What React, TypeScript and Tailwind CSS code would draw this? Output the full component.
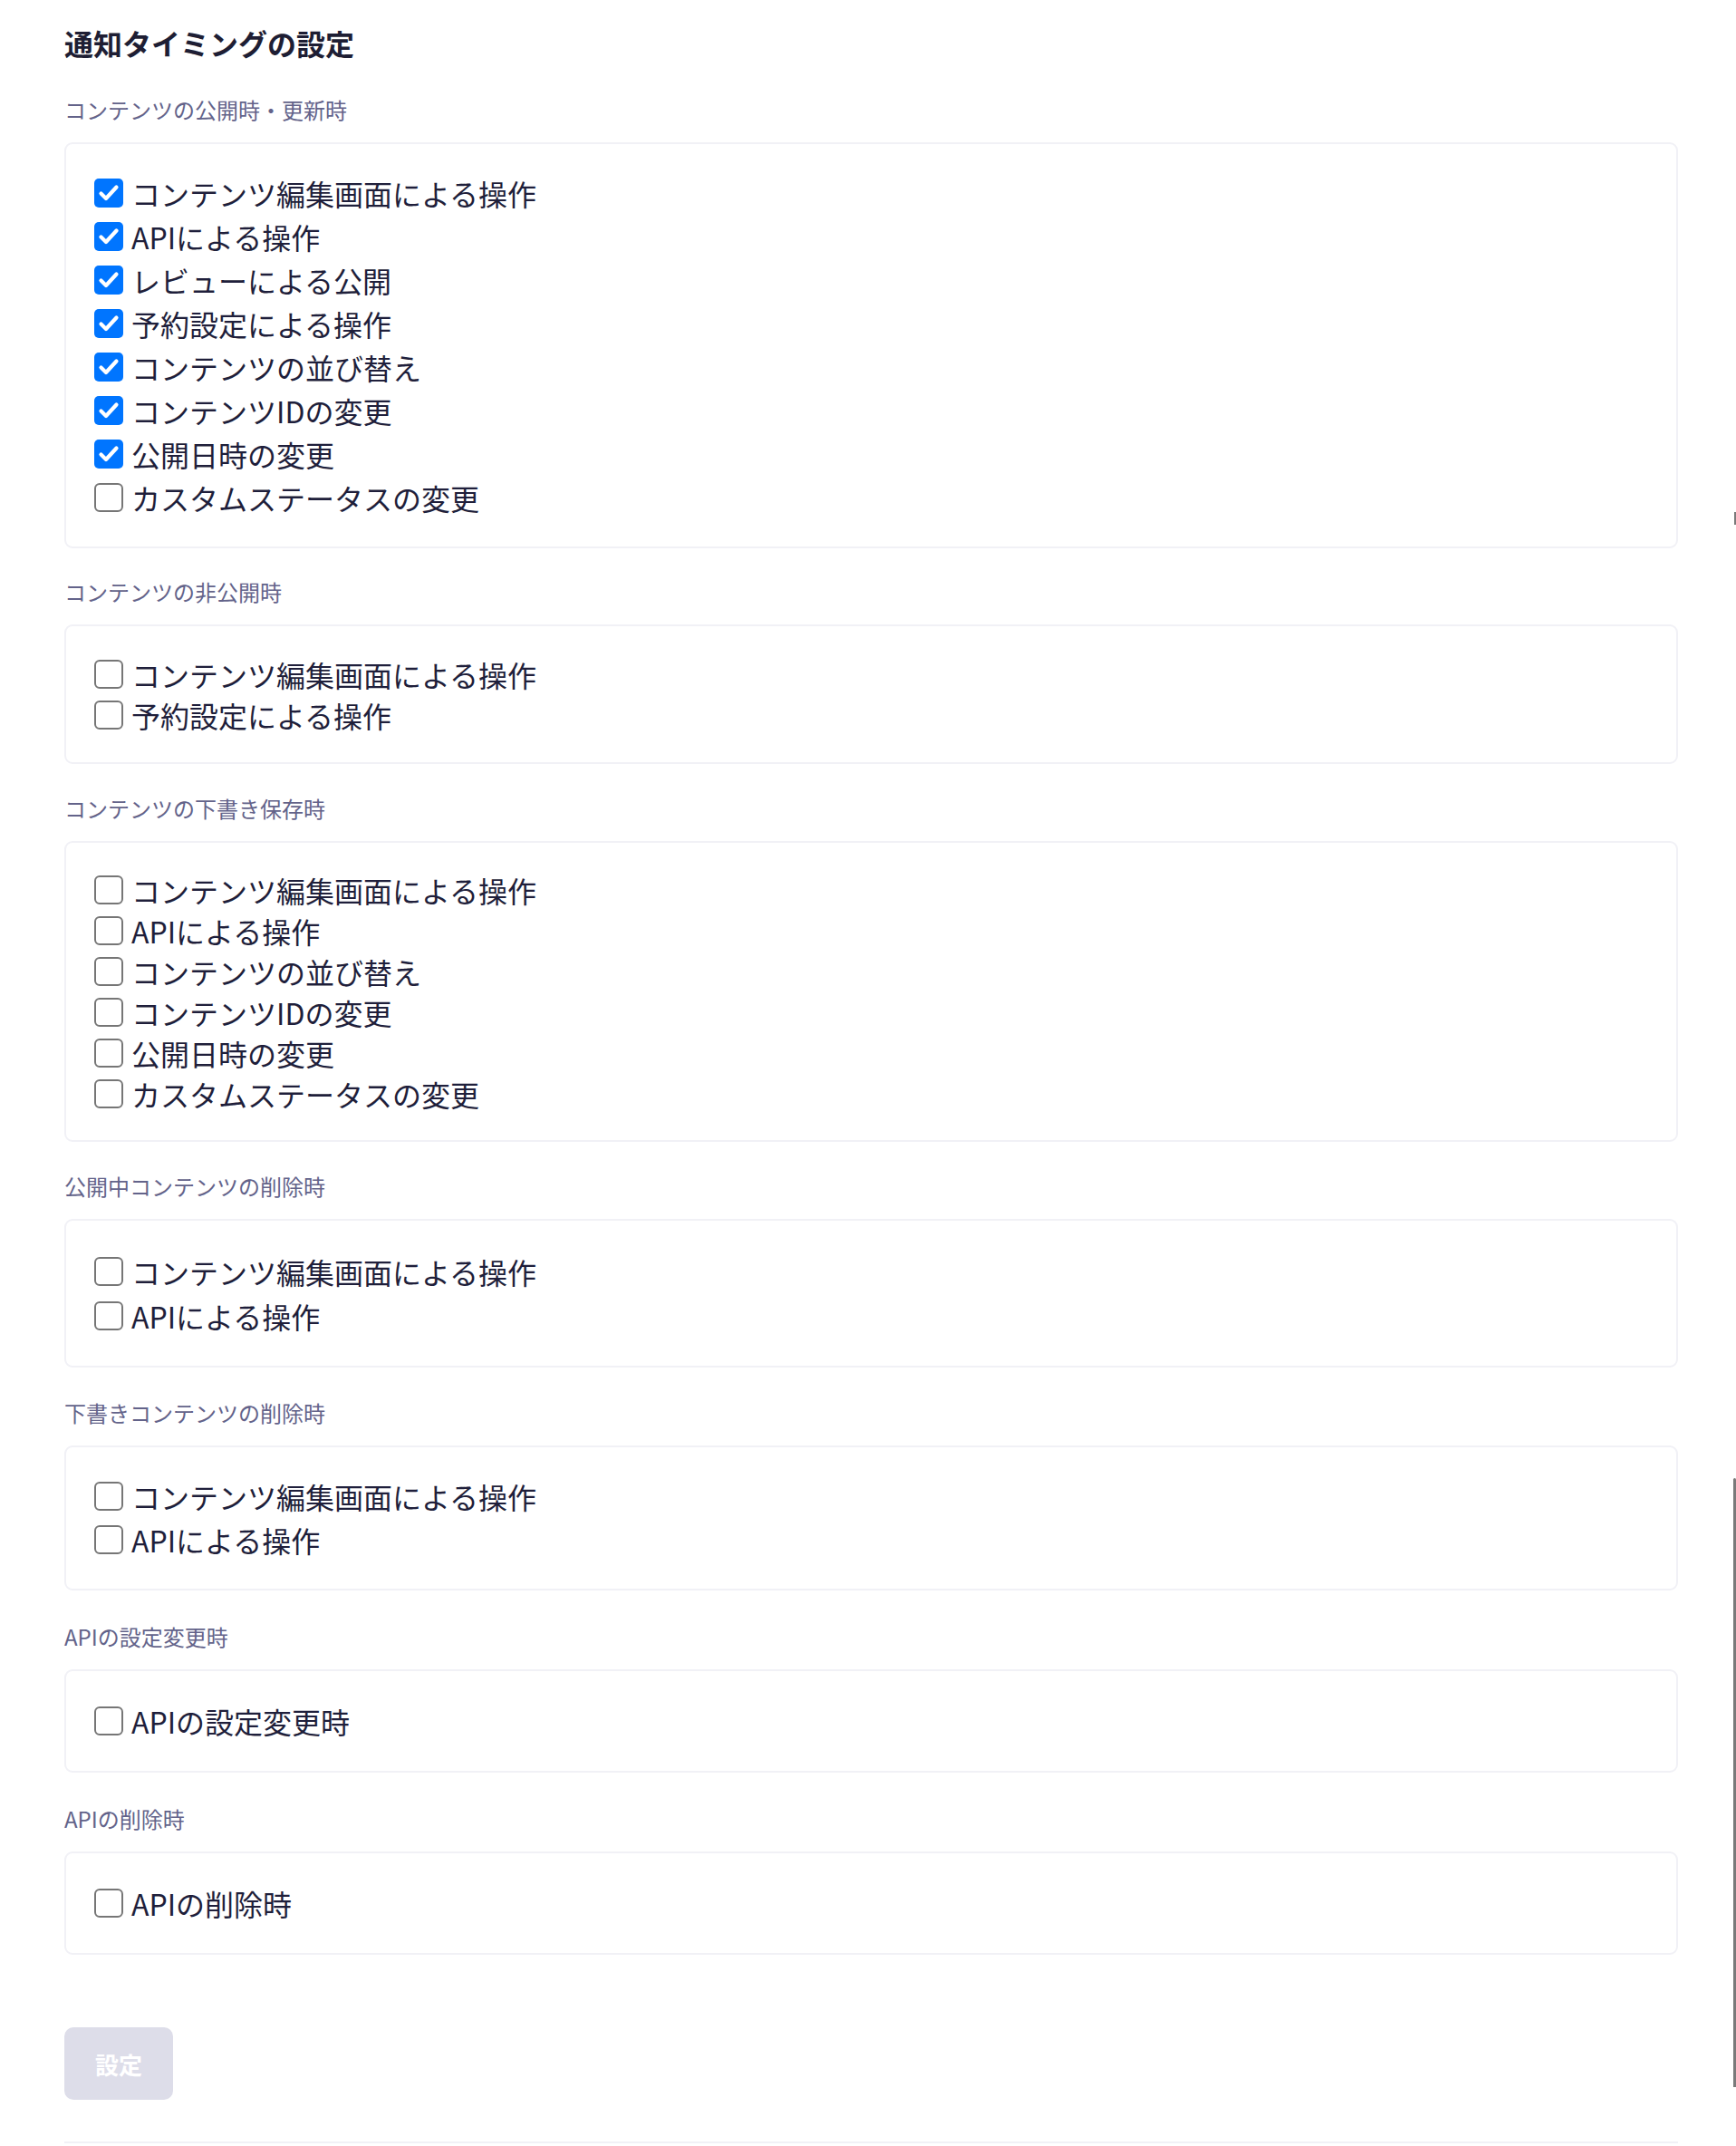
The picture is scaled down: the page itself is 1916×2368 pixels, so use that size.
import React from "react";

interface Section {
  label: string;
  rowClass: string;
  padClass: string;
  gapClass: string;
  items: { text: string; checked: boolean }[];
}

const sections: Section[] = [
  {
    label: "コンテンツの公開時・更新時",
    rowClass: "h-[48px]",
    padClass: "py-[30px]",
    gapClass: "mt-0",
    items: [
      { text: "コンテンツ編集画面による操作", checked: true },
      { text: "APIによる操作", checked: true },
      { text: "レビューによる公開", checked: true },
      { text: "予約設定による操作", checked: true },
      { text: "コンテンツの並び替え", checked: true },
      { text: "コンテンツIDの変更", checked: true },
      { text: "公開日時の変更", checked: true },
      { text: "カスタムステータスの変更", checked: false },
    ],
  },
  {
    label: "コンテンツの非公開時",
    rowClass: "h-[45px]",
    padClass: "py-[30px]",
    gapClass: "mt-[30px]",
    items: [
      { text: "コンテンツ編集画面による操作", checked: false },
      { text: "予約設定による操作", checked: false },
    ],
  },
  {
    label: "コンテンツの下書き保存時",
    rowClass: "h-[45px]",
    padClass: "py-[29px]",
    gapClass: "mt-[31px]",
    items: [
      { text: "コンテンツ編集画面による操作", checked: false },
      { text: "APIによる操作", checked: false },
      { text: "コンテンツの並び替え", checked: false },
      { text: "コンテンツIDの変更", checked: false },
      { text: "公開日時の変更", checked: false },
      { text: "カスタムステータスの変更", checked: false },
    ],
  },
  {
    label: "公開中コンテンツの削除時",
    rowClass: "h-[49px]",
    padClass: "py-[31px]",
    gapClass: "mt-[31px]",
    items: [
      { text: "コンテンツ編集画面による操作", checked: false },
      { text: "APIによる操作", checked: false },
    ],
  },
  {
    label: "下書きコンテンツの削除時",
    rowClass: "h-[48px]",
    padClass: "py-[30px]",
    gapClass: "mt-[32px]",
    items: [
      { text: "コンテンツ編集画面による操作", checked: false },
      { text: "APIによる操作", checked: false },
    ],
  },
  {
    label: "APIの設定変更時",
    rowClass: "h-[48px]",
    padClass: "py-[31px]",
    gapClass: "mt-[33px]",
    items: [{ text: "APIの設定変更時", checked: false }],
  },
  {
    label: "APIの削除時",
    rowClass: "h-[48px]",
    padClass: "py-[31px]",
    gapClass: "mt-[33px]",
    items: [{ text: "APIの削除時", checked: false }],
  },
];

function Checkbox({ checked }: { checked: boolean }) {
  if (checked) {
    return (
      <span className="w-[32px] h-[32px] rounded-[5px] bg-[#0075ff] flex items-center justify-center shrink-0">
        <svg width="32" height="32" viewBox="0 0 32 32" fill="none">
          <path
            d="M7.5 16.5 L13 22 L24.5 9.5"
            stroke="#ffffff"
            strokeWidth="4.2"
            strokeLinecap="round"
            strokeLinejoin="round"
          />
        </svg>
      </span>
    );
  }
  return (
    <span className="w-[32px] h-[32px] rounded-[6px] border-2 border-[#767676] bg-white shrink-0" />
  );
}

export default function App() {
  return (
    <div
      className="relative w-full h-[2368px] bg-white px-[71px] pt-[25px] overflow-hidden"
      style={{ fontFamily: '"Noto Sans CJK JP", "Noto Sans", sans-serif' }}
    >
      {/* Title */}
      <h1 className="text-[32px] leading-[45px] font-bold text-[#1e1e34] mb-[33px]">
        通知タイミングの設定
      </h1>

      {/* Sections */}
      <div className="w-[1781px] flex flex-col">
        {sections.map((section, i) => (
          <div key={i} className={section.gapClass}>
            <p className="text-[24px] leading-[36px] text-[#63638a] mb-[18px]">
              {section.label}
            </p>
            <div
              className={`border-2 border-[#f1f1f6] rounded-[9px] px-[31px] ${section.padClass}`}
            >
              {section.items.map((item, j) => (
                <label
                  key={j}
                  className={`flex items-center gap-[9px] ${section.rowClass}`}
                >
                  <Checkbox checked={item.checked} />
                  <span className="text-[32px] leading-none text-[#1f1f3b]">
                    {item.text}
                  </span>
                </label>
              ))}
            </div>
          </div>
        ))}
      </div>

      {/* Submit button */}
      <button
        disabled
        className="mt-[80px] w-[120px] h-[80px] rounded-[10px] bg-[#dddde9] text-white text-[26px] font-bold flex items-center justify-center"
      >
        設定
      </button>

      {/* Bottom divider */}
      <div className="mt-[46px] w-[1781px] h-[2px] bg-[#f1f1f6]" />

      {/* Scrollbar traces on the right edge */}
      <div className="absolute right-0 top-[565px] w-[2px] h-[14px] bg-[#7a7a7a]" />
      <div className="absolute right-0 top-[1631px] w-[3px] h-[672px] bg-[#7a7a7a] rounded-t-[2px]" />
    </div>
  );
}
